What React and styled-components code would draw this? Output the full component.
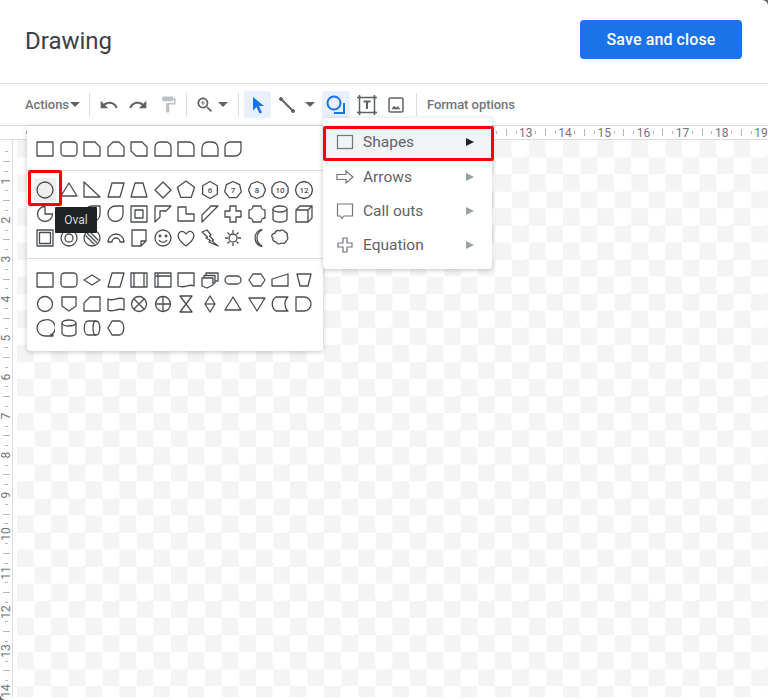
import React from 'react';
import styled, { createGlobalStyle } from 'styled-components';

const GlobalStyle = createGlobalStyle`
	html, body {
		margin: 0;
		padding: 0;
		background: #666;
		font-family: Roboto, "Liberation Sans", sans-serif;
	}
`;

const Dialog = styled.div`
	position: relative;
	width: 768px;
	height: 700px;
	box-sizing: border-box;
	padding-bottom: 3px;
	display: flex;
	flex-direction: column;
	overflow: hidden;
	background: #fff;
	border-radius: 0 6px 0 6px;
`;

const Header = styled.header`
	flex: 0 0 84px;
	display: flex;
	align-items: center;
	justify-content: space-between;
	box-sizing: border-box;
	padding: 0 26px 5px 25px;
	border-bottom: 1px solid #dadce0;
`;

const Title = styled.h1`
	margin: 4px 0 0;
	font-size: 24px;
	font-weight: 400;
	color: #3c4043;
`;

const SaveButton = styled.button`
	width: 162px;
	height: 39px;
	border: 0;
	border-radius: 4px;
	background: #1a73e8;
	color: #fff;
	font: 500 16px Roboto, sans-serif;
	letter-spacing: .1px;
`;

const Toolbar = styled.div`
	flex: 0 0 41px;
	display: flex;
	align-items: center;
	padding-left: 25px;
	color: #5f6368;
`;

const ToolText = styled.span`
	font-size: 13px;
	font-weight: 500;
	letter-spacing: -.05px;
	color: #70757a;
	margin-left: ${ props => props.$ml || 0 }px;
`;

const ToolDivider = styled.span`
	width: 1px;
	height: 23px;
	background: #dadce0;
	margin-left: ${ props => props.$ml || 0 }px;
`;

const ToolButton = styled.span`
	display: flex;
	align-items: center;
	justify-content: center;
	flex: 0 0 ${ props => props.$w || 24 }px;
	height: 27px;
	margin-left: ${ props => props.$ml || 0 }px;
	border-radius: 2px;
	background: ${ props => props.$active ? '#e8f0fe' : 'transparent' };
	color: ${ props => props.$active ? '#1a73e8' : props.$muted ? '#bdc1c6' : '#5f6368' };
`;

const Caret = styled.span`
	width: 0;
	height: 0;
	margin-left: ${ props => props.$ml || 0 }px;
	border-left: 5px solid transparent;
	border-right: 5px solid transparent;
	border-top: 5px solid #5f6368;
`;

const TopRuler = styled.div`
	flex: 0 0 15px;
	box-sizing: border-box;
	display: flex;
	align-items: center;
	padding-left: 11.5px;
	overflow: hidden;
	background: #fff;
	border-top: 1px solid #dadce0;
	border-bottom: 1px solid #dadce0;
`;

const Workspace = styled.div`
	flex: 1;
	display: flex;
	min-height: 0;
`;

const SideRuler = styled.div`
	flex: 0 0 13px;
	box-sizing: border-box;
	overflow: hidden;
	border-right: 1px solid #dadce0;
`;

const SideRulerInner = styled.div`
	margin-top: -3px;
`;

const RulerUnit = styled.div`
	flex: 0 0 39.2px;
	display: flex;
	flex-direction: ${ props => props.$vertical ? 'column' : 'row' };
	height: ${ props => props.$vertical ? '39.2px' : 'auto' };
`;

const RulerSlot = styled.span`
	flex: 0 0 9.8px;
	min-width: 0;
	min-height: 0;
	display: flex;
	align-items: center;
	justify-content: center;
	width: ${ props => props.$vertical ? '12px' : 'auto' };
	height: ${ props => props.$vertical ? '9.8px' : '13px' };
	font-size: 12px;
	line-height: 1;
	color: #70757a;
	white-space: nowrap;
`;

const RulerNumber = styled.span`
	display: block;
	flex-shrink: 0;
	transform: ${ props => props.$vertical ? 'rotate(-90deg)' : 'none' };
`;

const RulerTick = styled.i`
	display: block;
	background: #b4b7bb;
	width: ${ props => props.$vertical ? props.$size : 1 }px;
	height: ${ props => props.$vertical ? 1 : props.$size }px;
`;

const Canvas = styled.div`
	flex: 1;
	margin-left: 4px;
	background: repeating-conic-gradient(#fff 0 25%, #f4f4f4 0 50%) 0 0 / 34.14px 34.14px;
`;

const ShapePanel = styled.div`
	position: absolute;
	left: 27px;
	top: 126px;
	width: 296px;
	height: 225px;
	border-radius: 0 0 4px 4px;
	background: #fff;
	box-shadow: 0 1px 5px rgba(60, 64, 67, .3);
`;

const ShapeSection = styled.div`
	display: grid;
	grid-template-columns: repeat(12, 23.5px);
	grid-auto-rows: ${ props => props.$rowH }px;
	height: ${ props => props.$h }px;
	box-sizing: border-box;
	padding: ${ props => props.$pt }px 0 0 7px;
	border-bottom: ${ props => props.$last ? 0 : '1px solid #dadce0' };
`;

const ShapeCell = styled.span`
	display: flex;
	align-items: center;
	justify-content: center;
	width: 22px;
	height: 24px;
	background: ${ props => props.$hover ? '#eee' : 'transparent' };
`;

const ShapeSvg = styled.svg`
	width: 20px;
	height: 20px;
	fill: none;
	stroke: #4a4d51;
	stroke-width: 1.3;
	stroke-linejoin: round;
	text {
		fill: #4a4d51;
		stroke: none;
		font: 500 8px Roboto, sans-serif;
		text-anchor: middle;
	}
`;

const Menu = styled.div`
	position: absolute;
	left: 323px;
	top: 118px;
	width: 169px;
	height: 151px;
	box-sizing: border-box;
	padding-top: 7px;
	border-radius: 4px;
	background: #fff;
	box-shadow: 0 1px 5px rgba(60, 64, 67, .3);
`;

const MenuRow = styled.div`
	display: flex;
	align-items: center;
	height: 34.4px;
	padding: 0 18px 0 13px;
	background: ${ props => props.$active ? '#f1f3f4' : 'transparent' };
	color: #5f6368;
	font-size: 15.5px;
`;

const MenuLabel = styled.span`
	flex: 1;
	margin-left: 9px;
`;

const MenuIcon = styled.svg`
	width: 18px;
	height: 18px;
	fill: none;
	stroke: #70757a;
	stroke-width: 1.2;
`;

const MenuArrow = styled.span`
	width: 0;
	height: 0;
	border-top: 4px solid transparent;
	border-bottom: 4px solid transparent;
	border-left: 8px solid ${ props => props.$active ? '#202124' : '#9aa0a6' };
`;

const Highlight = styled.div`
	position: absolute;
	box-sizing: border-box;
	border: 3px solid #f00;
	left: ${ props => props.$x }px;
	top: ${ props => props.$y }px;
	width: ${ props => props.$w }px;
	height: ${ props => props.$h }px;
	border-radius: 2px;
`;

const Tooltip = styled.div`
	position: absolute;
	left: 55px;
	top: 207px;
	width: 42px;
	height: 26px;
	display: flex;
	align-items: center;
	justify-content: center;
	background: #202124;
	border-radius: 1px;
	color: #d5d6d7;
	font-size: 12px;
`;

const ring = ( n, r = 8.5 ) => Array.from( { length: n }, ( _, i ) => {
	const a = ( Math.PI * 2 * i ) / n - Math.PI / 2;
	return `${ ( 10 + r * Math.cos( a ) ).toFixed( 2 ) },${ ( 10 + r * Math.sin( a ) ).toFixed( 2 ) }`;
} ).join( ' ' );

const numbered = ( n, label ) => (
	<>
		<polygon points={ ring( n ) } />
		<text x="10" y="12.8">{ label }</text>
	</>
);

const P = ( { d } ) => <path d={ d } />;

const BASIC_TOP = [
	<rect x="2" y="3" width="16" height="14" />,
	<rect x="2" y="3" width="16" height="14" rx="3.5" />,
	<P d="M2 3h11l5 5v9H2z" />,
	<P d="M2 8l5-5h6l5 5v9H2z" />,
	<P d="M2 3h11l5 5v9H7l-5-5z" />,
	<P d="M2 8a5 5 0 0 1 5-5h6a5 5 0 0 1 5 5v9H2z" />,
	<P d="M2 3h11a5 5 0 0 1 5 5v9H2z" />,
	<P d="M2 9a6 6 0 0 1 6-6h4a6 6 0 0 1 6 6v8H2z" />,
	<P d="M7 3h11v8a6 6 0 0 1-6 6H2V8a5 5 0 0 1 5-5z" />,
];

const BASIC_MAIN = [
	<circle cx="10" cy="10" r="8" />,
	<P d="M10 3l8 13H2z" />,
	<P d="M2 2l16 15H2z" />,
	<P d="M6 3h12l-4 14H2z" />,
	<P d="M6 3h8l4 14H2z" />,
	<P d="M10 2l8 8-8 8-8-8z" />,
	<polygon points={ ring( 5, 9 ) } />,
	numbered( 6, '6' ),
	numbered( 7, '7' ),
	numbered( 8, '8' ),
	numbered( 10, '10' ),
	numbered( 12, '12' ),
	<P d="M10 10V2.5a7.5 7.5 0 1 0 7.5 7.5z" />,
	<P d="M4 4a8 8 0 1 0 12 0z" />,
	<P d="M10 2a8 8 0 1 0 8 8V2z" />,
	<P d="M10 2h7v8a7.5 7.5 0 0 1-15 0 7.5 7.5 0 0 1 8-8z" />,
	<>
		<rect x="2" y="2" width="16" height="16" />
		<rect x="6" y="6" width="8" height="8" />
	</>,
	<P d="M2 2h16l-5 5H7v6l-5 5z" />,
	<P d="M2 3h8v7h8v7H2z" />,
	<P d="M2 18V11L11 2h7z" />,
	<P d="M7 2h6v5h5v6h-5v5H7v-5H2V7h5z" />,
	<P d="M6 2h8a4 4 0 0 0 4 4v8a4 4 0 0 0-4 4H6a4 4 0 0 0-4-4V6a4 4 0 0 0 4-4z" />,
	<>
		<P d="M3 5v10c0 4 14 4 14 0V5" />
		<ellipse cx="10" cy="5" rx="7" ry="3" />
	</>,
	<>
		<P d="M2 6l4-4h12v12l-4 4H2z" />
		<P d="M2 6h12v12M14 6l4-4" />
	</>,
	<>
		<rect x="2" y="2" width="16" height="16" />
		<rect x="4.5" y="4.5" width="11" height="11" />
	</>,
	<>
		<circle cx="10" cy="10" r="8" />
		<circle cx="10" cy="10" r="4" />
	</>,
	<>
		<circle cx="10" cy="10" r="8" />
		<P d="M5 5l10 10M7.500 3.500l9 9M3.500 7.500l9 9" />
	</>,
	<P d="M2 14a8 8 0 0 1 16 0h-4a4 4 0 0 0-8 0z" />,
	<P d="M3 2h14v11l-5 5H3zM17 13h-5v5" />,
	<>
		<circle cx="10" cy="10" r="8" />
		<circle cx="7" cy="8" r=".8" />
		<circle cx="13" cy="8" r=".8" />
		<P d="M6 12a4.500 4.500 0 0 0 8 0" />
	</>,
	<P d="M10 18C2 12 1 8 3 5c2-2.500 5-2 7 1 2-3 5-3.500 7-1 2 3 1 7-7 13z" />,
	<P d="M2 4l5-2 4 5-1.500 1 4 4-1.500 1L18 18 9 14l1.500-1.500L6 10l1.500-1z" />,
	<>
		<circle cx="10" cy="10" r="4" />
		<P d="M10 2v3M10 15v3M2 10h3M15 10h3M4.500 4.500l2 2M13.500 13.500l2 2M15.500 4.500l-2 2M6.500 13.500l-2 2" />
	</>,
	<P d="M13 2a9 9 0 0 0 0 16c1 .5 2 .5 2 0-3-1.500-5-4-5-8s2-6.500 5-8c0-.5-1-.5-2 0z" />,
	<P d="M5 5c1-3 4-3 5-2 1-1.500 4-1 5 1 2 0 3 3 2 4 1.500 1 1 4-1 5 0 2-3 3-5 2-1 1.500-4 1-5-1-2 0-4-2-3-4-2-1-2-4 2-5z" />,
];

const FLOW = [
	<rect x="2" y="3" width="16" height="14" />,
	<rect x="2" y="3" width="16" height="14" rx="3.500" />,
	<P d="M10 5l8 5-8 5-8-5z" />,
	<P d="M6 3h12l-4 14H2z" />,
	<>
		<rect x="2" y="3" width="16" height="14" />
		<P d="M5 3v14M15 3v14" />
	</>,
	<>
		<rect x="2" y="3" width="16" height="14" />
		<P d="M2 6h16M5 3v14" />
	</>,
	<P d="M2 3h16v13c-5-3-8 3-16 0z" />,
	<>
		<P d="M2 8h11v7l-6 3-5-2z" />
		<P d="M4 8V5.500h11V13h-2M6 5.500V3h12v8h-3" />
	</>,
	<rect x="2" y="6" width="16" height="8" rx="4" />,
	<P d="M6 4h8l4 6-4 6H6l-4-6z" />,
	<P d="M2 9l16-5v12H2z" />,
	<P d="M3 4h14l-3 12H6z" />,
	<circle cx="10" cy="10" r="7.500" />,
	<P d="M3 3h14v9l-7 5-7-5z" />,
	<P d="M8 3h10v14H2V9z" />,
	<P d="M2 5c5 3 10-3 16 0v11c-6-3-11 3-16 0z" />,
	<>
		<circle cx="10" cy="10" r="7.500" />
		<P d="M4.700 4.700l10.600 10.600M15.300 4.700L4.700 15.300" />
	</>,
	<>
		<circle cx="10" cy="10" r="7.500" />
		<P d="M10 2.500v15M2.500 10h15" />
	</>,
	<P d="M4 2h12L4 18h12z" />,
	<>
		<P d="M10 2l5 8-5 8-5-8z" />
		<P d="M5 10h10" />
	</>,
	<P d="M10 3l8 13H2z" />,
	<P d="M2 4h16l-8 13z" />,
	<P d="M6 3h12c-4 3-4 11 0 14H6c-5-3-5-11 0-14z" />,
	<P d="M2 3h8a7 7 0 0 1 0 14H2z" />,
	<P d="M10 2a8 8 0 1 0 0 16h8v-1h-2.500A8 8 0 0 0 10 2z" />,
	<>
		<P d="M3 5v10c0 4 14 4 14 0V5" />
		<ellipse cx="10" cy="5" rx="7" ry="3" />
	</>,
	<>
		<P d="M6 3h8c5 0 5 14 0 14H6c-5 0-5-14 0-14z" />
		<P d="M14 3c-4 0-4 14 0 14" />
	</>,
	<P d="M6 3h8c5 2 5 12 0 14H6l-4-7z" />,
];

const Shape = ( { children, hover } ) => (
	<ShapeCell $hover={ hover }>
		<ShapeSvg viewBox="0 0 20 20">{ children }</ShapeSvg>
	</ShapeCell>
);

const MENU_ITEMS = [
	{ label: 'Shapes', icon: <rect x="1.500" y="2.500" width="15" height="13" />, active: true },
	{ label: 'Arrows', icon: <path d="M1 6.500h9V3l7 6-7 6v-3.500H1z" /> },
	{ label: 'Call outs', icon: <path d="M1.500 2h15v12H8l-2 2.500L4.500 14h-3z" /> },
	{ label: 'Equation', icon: <path d="M7 2h4v5h5v4h-5v5H7v-5H2V7h5z" /> },
];

// Numbers below labelFrom sit under the open menus, so they are not rendered.
const Ruler = ( { from, to, labelFrom, vertical } ) => {
	const units = [];
	for ( let n = from; n <= to; n++ ) {
		units.push(
			<RulerUnit key={ n } $vertical={ vertical }>
				<RulerSlot $vertical={ vertical }>
					{ n >= labelFrom && <RulerNumber $vertical={ vertical }>{ n }</RulerNumber> }
				</RulerSlot>
				<RulerSlot $vertical={ vertical }><RulerTick $vertical={ vertical } $size={ 3 } /></RulerSlot>
				<RulerSlot $vertical={ vertical }><RulerTick $vertical={ vertical } $size={ 7 } /></RulerSlot>
				<RulerSlot $vertical={ vertical }><RulerTick $vertical={ vertical } $size={ 3 } /></RulerSlot>
			</RulerUnit>
		);
	}
	return units;
};

export default function App() {
	return (
		<Dialog>
			<GlobalStyle />
			<Header>
				<Title>Drawing</Title>
				<SaveButton>Save and close</SaveButton>
			</Header>

			<Toolbar>
				<ToolText>Actions</ToolText>
				<Caret $ml={ 1 } />
				<ToolDivider $ml={ 9 } />
				<ToolButton $w={ 28 } $ml={ 5 }>
					<svg width="20" height="20" viewBox="0 0 24 24" fill="currentColor"><path d="M12.500 8c-2.650 0-5.050.99-6.900 2.600L2 7v9h9l-3.620-3.620c1.390-1.160 3.160-1.880 5.120-1.880 3.540 0 6.550 2.310 7.600 5.500l2.370-.78C21.080 11.030 17.150 8 12.500 8z" /></svg>
				</ToolButton>
				<ToolButton $w={ 28 } $ml={ 1 }>
					<svg width="20" height="20" viewBox="0 0 24 24" fill="currentColor"><path d="M18.400 10.600C16.550 8.990 14.150 8 11.500 8c-4.650 0-8.580 3.030-9.960 7.220L3.900 16c1.050-3.190 4.050-5.500 7.600-5.500 1.950 0 3.730.72 5.120 1.880L13 16h9V7l-3.600 3.600z" /></svg>
				</ToolButton>
				<ToolButton $w={ 28 } $ml={ 2 } $muted>
					<svg width="19" height="19" viewBox="0 0 24 24" fill="currentColor"><path d="M18 4V3c0-.55-.45-1-1-1H5c-.55 0-1 .45-1 1v4c0 .55.45 1 1 1h12c.55 0 1-.45 1-1V6h1v4H9v11c0 .55.45 1 1 1h2c.55 0 1-.45 1-1v-9h8V4h-3z" /></svg>
				</ToolButton>
				<ToolDivider $ml={ 4 } />
				<ToolButton $w={ 24 } $ml={ 6 }>
					<svg width="20" height="20" viewBox="0 0 24 24" fill="currentColor"><path d="M15.500 14h-.79l-.28-.27C15.410 12.590 16 11.110 16 9.500 16 5.910 13.090 3 9.500 3S3 5.910 3 9.500 5.910 16 9.500 16c1.610 0 3.090-.59 4.230-1.570l.27.28v.79l5 4.990L20.490 19l-4.990-5zm-6 0C7.010 14 5 11.990 5 9.500S7.010 5 9.500 5 14 7.010 14 9.500 11.990 14 9.500 14zm2.500-4h-2v2H9v-2H7V9h2V7h1v2h2v1z" /></svg>
				</ToolButton>
				<Caret $ml={ 1 } />
				<ToolDivider $ml={ 10 } />
				<ToolButton $w={ 27 } $ml={ 5 } $active>
					<svg width="16" height="18" viewBox="0 0 16 18" fill="currentColor"><path d="M3 1l11 9H9l3 6.500-2.500 1L6.500 11 3 14.500z" /></svg>
				</ToolButton>
				<ToolButton $w={ 24 } $ml={ 4 }>
					<svg width="20" height="20" viewBox="0 0 20 20" fill="currentColor" stroke="currentColor"><path d="M4.500 4.500l11 11" strokeWidth="2" /><circle cx="4" cy="4" r="1.500" /><circle cx="16" cy="16" r="1.500" /></svg>
				</ToolButton>
				<Caret $ml={ 6 } />
				<ToolButton $w={ 28 } $ml={ 7 } $active>
					<svg width="22" height="22" viewBox="0 0 22 22" fill="none" stroke="currentColor" strokeWidth="2"><circle cx="9" cy="9" r="6.500" /><path d="M19 9v10H9" /></svg>
				</ToolButton>
				<ToolButton $w={ 24 } $ml={ 5 }>
					<svg width="20" height="20" viewBox="0 0 20 20" fill="none" stroke="currentColor" strokeWidth="1.500"><rect x="2.500" y="2.500" width="15" height="15" /><path d="M6.500 6.500h7M10 6.500v7.500" strokeWidth="2" /><path d="M0 2.500h4M2.500 0v4M16 2.500h4M17.500 0v4M0 17.500h4M2.500 16v4M16 17.500h4M17.500 16v4" /></svg>
				</ToolButton>
				<ToolButton $w={ 24 } $ml={ 5 }>
					<svg width="16" height="16" viewBox="0 0 16 16" fill="none" stroke="currentColor" strokeWidth="1.500"><rect x="1" y="1" width="14" height="14" rx="1.500" /><path d="M4 12l2-3 2 2 1.500-1.500L12 12z" fill="currentColor" strokeWidth=".5" /></svg>
				</ToolButton>
				<ToolDivider $ml={ 8 } />
				<ToolText $ml={ 10 }>Format options</ToolText>
			</Toolbar>

			<TopRuler><Ruler from={ 0 } to={ 19 } labelFrom={ 13 } /></TopRuler>

			<Workspace>
				<SideRuler>
					<SideRulerInner><Ruler from={ 0 } to={ 14 } labelFrom={ 1 } vertical /></SideRulerInner>
				</SideRuler>
				<Canvas />
			</Workspace>

			<ShapePanel>
				<ShapeSection $h={ 45 } $pt={ 11 } $rowH={ 24 }>
					{ BASIC_TOP.map( ( s, i ) => <Shape key={ i }>{ s }</Shape> ) }
				</ShapeSection>
				<ShapeSection $h={ 88 } $pt={ 7 } $rowH={ 24 }>
					{ BASIC_MAIN.map( ( s, i ) => <Shape key={ i } hover={ i === 0 }>{ s }</Shape> ) }
				</ShapeSection>
				<ShapeSection $h={ 92 } $pt={ 9 } $rowH={ 24 } $last>
					{ FLOW.map( ( s, i ) => <Shape key={ i }>{ s }</Shape> ) }
				</ShapeSection>
			</ShapePanel>

			<Menu>
				{ MENU_ITEMS.map( item => (
					<MenuRow key={ item.label } $active={ item.active }>
						<MenuIcon viewBox="0 0 18 18">{ item.icon }</MenuIcon>
						<MenuLabel>{ item.label }</MenuLabel>
						<MenuArrow $active={ item.active } />
					</MenuRow>
				) ) }
			</Menu>

			<Tooltip>Oval</Tooltip>
			<Highlight $x={ 28 } $y={ 170 } $w={ 34 } $h={ 36 } />
			<Highlight $x={ 323 } $y={ 126 } $w={ 171 } $h={ 35 } />
		</Dialog>
	);
}
